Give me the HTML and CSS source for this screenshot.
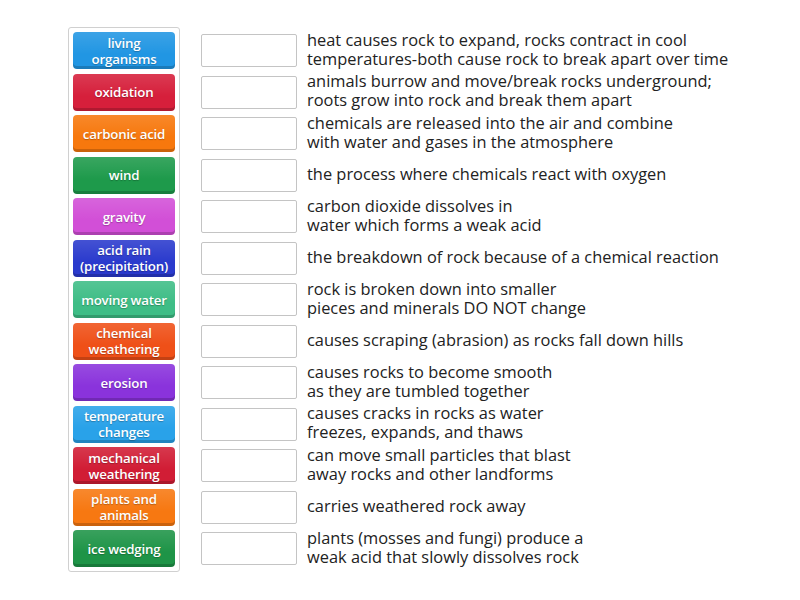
FILE: index.html
```html
<!DOCTYPE html>
<html>
<head>
<meta charset="utf-8">
<link rel="stylesheet" href="styles.css">
</head>
<body>
<div class="page">
  <div class="panel">
    <div class="tile c1">living<br>organisms</div>
    <div class="tile c2">oxidation</div>
    <div class="tile c3">carbonic acid</div>
    <div class="tile c4">wind</div>
    <div class="tile c5">gravity</div>
    <div class="tile c6">acid rain<br>(precipitation)</div>
    <div class="tile c7">moving water</div>
    <div class="tile c8">chemical<br>weathering</div>
    <div class="tile c9">erosion</div>
    <div class="tile c10">temperature<br>changes</div>
    <div class="tile c11">mechanical<br>weathering</div>
    <div class="tile c12">plants and<br>animals</div>
    <div class="tile c13">ice wedging</div>
  </div>
  <div class="rows">
    <div class="row"><div class="slot"></div><div class="desc">heat causes rock to expand, rocks contract in cool<br>temperatures-both cause rock to break apart over time</div></div>
    <div class="row"><div class="slot"></div><div class="desc">animals burrow and move/break rocks underground;<br>roots grow into rock and break them apart</div></div>
    <div class="row"><div class="slot"></div><div class="desc">chemicals are released into the air and combine<br>with water and gases in the atmosphere</div></div>
    <div class="row"><div class="slot"></div><div class="desc">the process where chemicals react with oxygen</div></div>
    <div class="row"><div class="slot"></div><div class="desc">carbon dioxide dissolves in<br>water which forms a weak acid</div></div>
    <div class="row"><div class="slot"></div><div class="desc">the breakdown of rock because of a chemical reaction</div></div>
    <div class="row"><div class="slot"></div><div class="desc">rock is broken down into smaller<br>pieces and minerals DO NOT change</div></div>
    <div class="row"><div class="slot"></div><div class="desc">causes scraping (abrasion) as rocks fall down hills</div></div>
    <div class="row"><div class="slot"></div><div class="desc">causes rocks to become smooth<br>as they are tumbled together</div></div>
    <div class="row"><div class="slot"></div><div class="desc">causes cracks in rocks as water<br>freezes, expands, and thaws</div></div>
    <div class="row"><div class="slot"></div><div class="desc">can move small particles that blast<br>away rocks and other landforms</div></div>
    <div class="row"><div class="slot"></div><div class="desc">carries weathered rock away</div></div>
    <div class="row"><div class="slot"></div><div class="desc">plants (mosses and fungi) produce a<br>weak acid that slowly dissolves rock</div></div>
  </div>
</div>
</body>
</html>
```

FILE: styles.css
```css
html, body {
  margin: 0;
  padding: 0;
  background: #ffffff;
}

.page {
  display: flex;
  align-items: flex-start;
  padding: 27px 0 0 68px;
  font-family: "Open Sans", "Noto Sans", sans-serif;
}

.panel {
  display: flex;
  flex-direction: column;
  gap: 4.5px;
  padding: 4px;
  border: 1px solid #d0d0d0;
  border-radius: 3px;
  width: 102px;
}

.tile {
  height: 37px;
  border-radius: 4px;
  display: flex;
  align-items: center;
  justify-content: center;
  text-align: center;
  color: #ffffff;
  font-size: 13.3px;
  font-weight: 600;
  line-height: 16px;
  letter-spacing: -0.2px;
  text-shadow: 0 1px 1px rgba(0, 0, 0, 0.25);
  box-shadow: inset 0 -3px 0 rgba(0, 0, 0, 0.18);
  background-image: linear-gradient(to bottom, rgba(255, 255, 255, 0.12), rgba(255, 255, 255, 0) 60%);
  white-space: nowrap;
}

.c1 { background-color: #2196e3; }
.c2 { background-color: #d61f3b; }
.c3 { background-color: #f7780d; }
.c4 { background-color: #1e9a4b; }
.c5 { background-color: #d24fd7; }
.c6 { background-color: #2a3acd; }
.c7 { background-color: #3ebd86; }
.c8 { background-color: #ef5018; }
.c9 { background-color: #8a33dc; }
.c10 { background-color: #29a2e9; }
.c11 { background-color: #d11d35; }
.c12 { background-color: #f77811; }
.c13 { background-color: #1e9447; }

.rows {
  display: flex;
  flex-direction: column;
  gap: 4.5px;
  padding-top: 5px;
  margin-left: 21px;
}

.row {
  height: 37px;
  display: flex;
  align-items: center;
  gap: 10px;
}

.slot {
  width: 94px;
  height: 31px;
  border: 1px solid #c4c4c4;
  border-radius: 2px;
  background: #ffffff;
  flex: none;
}

.desc {
  font-size: 16.4px;
  line-height: 19px;
  padding-bottom: 4px;
  color: #222222;
  white-space: nowrap;
}
```
